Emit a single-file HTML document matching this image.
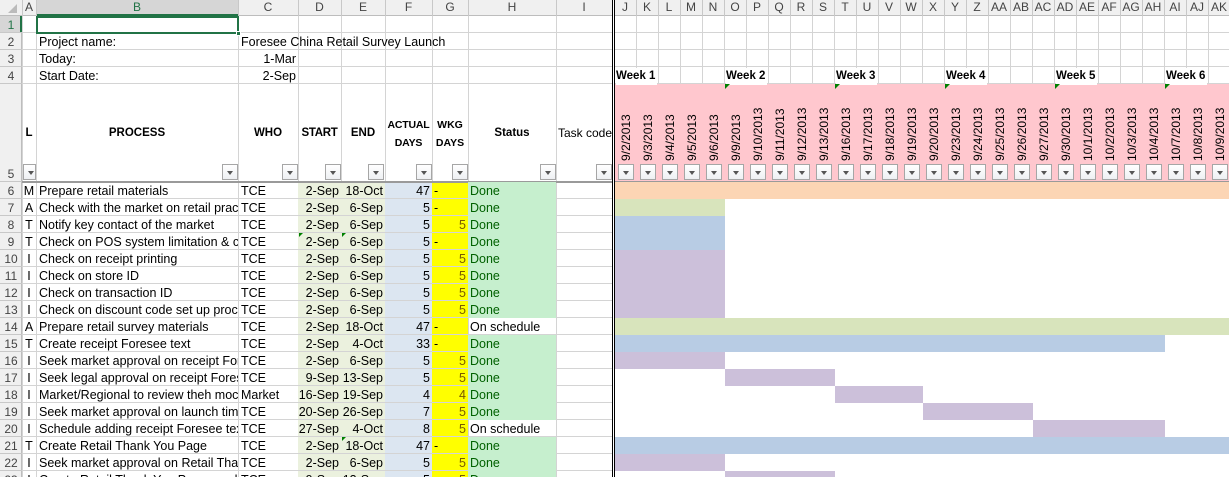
<!DOCTYPE html>
<html><head><meta charset="utf-8"><style>
*{margin:0;padding:0;box-sizing:border-box}
html,body{width:1229px;height:477px;overflow:hidden}
body{background:#fff;font-family:"Liberation Sans",sans-serif;font-size:12.5px;position:relative}
.a{position:absolute;overflow:hidden;white-space:nowrap}
.hl{position:absolute;background:#d4d4d4}
.t{position:absolute;white-space:nowrap;line-height:17px}
.btn{position:absolute;width:16px;height:16px;border:1px solid #a6a6a6;background:linear-gradient(#fff,#eef0f3)}
.btn:after{content:"";position:absolute;left:4px;top:6px;border-left:3.5px solid transparent;border-right:3.5px solid transparent;border-top:4px solid #555}
.d{position:absolute;writing-mode:vertical-rl;transform:rotate(180deg);font-size:12px;line-height:22px;width:22px;text-align:left}
.b{font-weight:bold;font-size:11.5px}
</style></head><body>
<div id="r"></div>
<script>
var H='';
function box(x,y,w,h,s){H+='<div class="a" style="left:'+x+'px;top:'+y+'px;width:'+w+'px;height:'+h+'px;'+(s||'')+'"></div>';}
function txt(x,y,w,t,s){H+='<div class="t" style="left:'+x+'px;top:'+y+'px;width:'+w+'px;overflow:hidden;'+(s||'')+'">'+t+'</div>';}
var cx=[22,36,238,298,341,385,432,468,556,612];
var G0=614,CW=22,NC=28;
function rowTop(r){return r<=5?[0,16,33,50,67,84][r]:182+(r-6)*17;}
function rowH(r){return r==5?98:17;}
for(var i=0;i<cx.length;i++){H+='<div class="hl" style="left:'+cx[i]+'px;top:0;width:1px;height:477px"></div>';}
for(var r=6;r<=23;r++){var y=rowTop(r);
 box(298,y,87,17,'background:#ebf1de');
 box(385,y,47,17,'background:#dce6f1');
 box(432,y,36,17,'background:#ffff00');
}
for(var r=1;r<=23;r++){var y=rowTop(r)+rowH(r);H+='<div class="hl" style="left:0;top:'+(y-1)+'px;width:1229px;height:1px'+(r==5?';background:#9a9a9a;height:2px;top:'+(y-1)+'px':'')+'"></div>';}
for(var i=0;i<=NC;i++){H+='<div class="hl" style="left:'+(G0+i*CW)+'px;top:0;width:1px;height:84px"></div>';}
box(615,84,614,97,'background:#ffc7ce');
var data=[
[6,'M','Prepare retail materials','TCE','2-Sep','18-Oct','47','-','Done'],
[7,'A','Check with the market on retail practice','TCE','2-Sep','6-Sep','5','-','Done'],
[8,'T','Notify key contact of the market','TCE','2-Sep','6-Sep','5','5','Done'],
[9,'T','Check on POS system limitation &amp; capability','TCE','2-Sep','6-Sep','5','-','Done'],
[10,'I','Check on receipt printing','TCE','2-Sep','6-Sep','5','5','Done'],
[11,'I','Check on store ID','TCE','2-Sep','6-Sep','5','5','Done'],
[12,'I','Check on transaction ID','TCE','2-Sep','6-Sep','5','5','Done'],
[13,'I','Check on discount code set up process','TCE','2-Sep','6-Sep','5','5','Done'],
[14,'A','Prepare retail survey materials','TCE','2-Sep','18-Oct','47','-','On schedule'],
[15,'T','Create receipt Foresee text','TCE','2-Sep','4-Oct','33','-','Done'],
[16,'I','Seek market approval on receipt Foresee','TCE','2-Sep','6-Sep','5','5','Done'],
[17,'I','Seek legal approval on receipt Foresee','TCE','9-Sep','13-Sep','5','5','Done'],
[18,'I','Market/Regional to review theh mock','Market','16-Sep','19-Sep','4','4','Done'],
[19,'I','Seek market approval on launch timing','TCE','20-Sep','26-Sep','7','5','Done'],
[20,'I','Schedule adding receipt Foresee text','TCE','27-Sep','4-Oct','8','5','On schedule'],
[21,'T','Create Retail Thank You Page','TCE','2-Sep','18-Oct','47','-','Done'],
[22,'I','Seek market approval on Retail Thank You','TCE','2-Sep','6-Sep','5','5','Done'],
[23,'I','Create Retail Thank You Page wording','TCE','9-Sep','13-Sep','5','5','Done']];
data.forEach(function(d){var y=rowTop(d[0])+1;
 if(d[8]=='Done')box(468,y-1,88,17,'background:#c6efce');
 txt(22,y,14,d[1],'text-align:center');
 txt(39,y,199,d[2]);
 txt(241,y,57,d[3]);
 txt(298,y,41,d[4],'text-align:right');
 txt(341,y,42,d[5],'text-align:right');
 txt(385,y,45,d[6],'text-align:right');
 if(d[7]=='-')txt(434,y,30,'-');else txt(432,y,34,d[7],'text-align:right;color:#7a5a00');
 txt(470,y,86,d[8],d[8]=='Done'?'color:#006100':'');
});
var bars=[[6,0,28,'#fcd5b4'],[7,0,5,'#d8e4bc'],[8,0,5,'#b8cce4'],[9,0,5,'#b8cce4'],[10,0,5,'#ccc0da'],[11,0,5,'#ccc0da'],[12,0,5,'#ccc0da'],[13,0,5,'#ccc0da'],[14,0,28,'#d8e4bc'],[15,0,25,'#b8cce4'],[16,0,5,'#ccc0da'],[17,5,5,'#ccc0da'],[18,10,4,'#ccc0da'],[19,14,5,'#ccc0da'],[20,19,6,'#ccc0da'],[21,0,28,'#b8cce4'],[22,0,5,'#ccc0da'],[23,5,5,'#ccc0da']];
box(615,183,614,294,'background:#fff');
bars.forEach(function(b){var y=rowTop(b[0]);box(G0+1+b[1]*CW,y,b[2]*CW,17,'background:'+b[3]);});
box(0,0,1229,16,'background:#f0f0f0');
H+='<div class="hl" style="left:0;top:15px;width:1229px;height:1px;background:#bdbdbd"></div>';
box(36,0,202,16,'background:#d6d6d6;border-bottom:2px solid #217346');
box(0,16,22,461,'background:#f0f0f0;border-right:1px solid #bdbdbd');
box(0,16,22,17,'background:#d6d6d6;border-right:2px solid #217346');
var letters=['A','B','C','D','E','F','G','H','I'];
for(var i=0;i<9;i++){txt(cx[i],-1,cx[i+1]-cx[i],letters[i],'text-align:center;font-size:12px;color:'+(i==1?'#217346':'#444'));}
var gl='J K L M N O P Q R S T U V W X Y Z AA AB AC AD AE AF AG AH AI AJ AK'.split(' ');
for(var i=0;i<NC;i++){txt(G0+i*CW,-1,CW,gl[i],'text-align:center;font-size:12px;color:#444');H+='<div class="hl" style="left:'+(G0+i*CW)+'px;top:0;width:1px;height:16px;background:#c8c8c8"></div>';}
for(var i=0;i<9;i++)H+='<div class="hl" style="left:'+cx[i]+'px;top:0;width:1px;height:16px;background:#c8c8c8"></div>';
H+='<div style="position:absolute;left:8px;top:4px;width:0;height:0;border-left:9px solid transparent;border-bottom:9px solid #bbb"></div>';
for(var r=1;r<=23;r++){var y=rowTop(r);var h=rowH(r);txt(0,y+h-16,22,r,'text-align:center;font-size:12px;color:'+(r==1?'#217346':'#444'));H+='<div class="hl" style="left:0;top:'+(y+h-1)+'px;width:22px;height:1px;background:#c8c8c8"></div>';}
box(36,16,203,18,'border:2px solid #217346');
box(236,31,5,5,'background:#217346;border:1px solid #fff');
txt(39,34,200,'Project name:');txt(241,34,300,'Foresee China Retail Survey Launch','overflow:visible');
txt(39,51,200,'Today:');txt(238,51,58,'1-Mar','text-align:right');
txt(39,68,200,'Start Date:');txt(238,68,58,'2-Sep','text-align:right');
H+='<div class="t b" style="left:22px;top:125px;width:14px;text-align:center">L</div>';
H+='<div class="t b" style="left:36px;top:125px;width:202px;text-align:center">PROCESS</div>';
H+='<div class="t b" style="left:238px;top:125px;width:60px;text-align:center">WHO</div>';
H+='<div class="t b" style="left:298px;top:125px;width:43px;text-align:center;letter-spacing:-0.3px">START</div>';
H+='<div class="t b" style="left:341px;top:125px;width:44px;text-align:center">END</div>';
H+='<div class="t b" style="left:385px;top:116px;width:47px;text-align:center;line-height:18px;white-space:normal;font-size:10.5px;letter-spacing:-0.2px">ACTUAL DAYS</div>';
H+='<div class="t b" style="left:432px;top:116px;width:36px;text-align:center;line-height:18px;white-space:normal;font-size:10.5px">WKG DAYS</div>';
H+='<div class="t b" style="left:468px;top:125px;width:88px;text-align:center">Status</div>';
H+='<div class="t" style="left:558px;top:125px;width:54px;overflow:hidden;font-size:12px">Task code</div>';
H+='<div class="btn" style="left:23px;top:164px;width:13px"></div>';
[222,282,325,368,416,452,540,596].forEach(function(x){H+='<div class="btn" style="left:'+x+'px;top:164px"></div>';});
var dates=['9/2/2013','9/3/2013','9/4/2013','9/5/2013','9/6/2013','9/9/2013','9/10/2013','9/11/2013','9/12/2013','9/13/2013','9/16/2013','9/17/2013','9/18/2013','9/19/2013','9/20/2013','9/23/2013','9/24/2013','9/25/2013','9/26/2013','9/27/2013','9/30/2013','10/1/2013','10/2/2013','10/3/2013','10/4/2013','10/7/2013','10/8/2013','10/9/2013'];
for(var i=0;i<NC;i++){var x=G0+i*CW;
 H+='<div class="d" style="left:'+(x+1)+'px;top:96px;height:65px">'+dates[i]+'</div>';
 H+='<div class="btn" style="left:'+(x+4)+'px;top:164px"></div>';
 if(i%5==0){H+='<div class="t b" style="left:'+(x+2)+'px;top:68px;background:#fff;padding-right:2px">Week '+(i/5+1)+'</div>';
  if(i>0)H+='<div style="position:absolute;left:'+(x+1)+'px;top:84px;border-right:5px solid transparent;border-top:5px solid #008000"></div>';}
}
[[298,9],[341,9],[341,21]].forEach(function(c){H+='<div style="position:absolute;left:'+(c[0]+1)+'px;top:'+rowTop(c[1])+'px;border-right:4px solid transparent;border-top:4px solid #008000"></div>';});
box(612,0,3,477,'border-left:1px solid #000;border-right:1px solid #000;background:#fff');
document.getElementById('r').innerHTML=H;
</script>
</body></html>
